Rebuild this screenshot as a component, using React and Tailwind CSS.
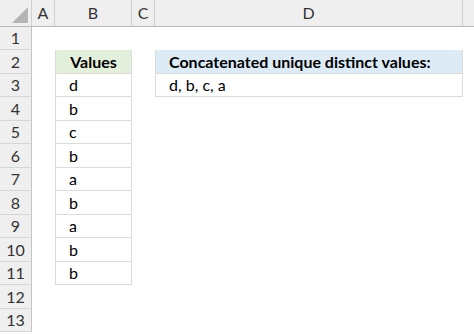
import React from "react";

const rowHeights = [23, 24, 23, 24, 23, 24, 23, 24, 23, 24, 23, 24, 23];
const bVals = { 3: "d", 4: "b", 5: "c", 6: "b", 7: "a", 8: "b", 9: "a", 10: "b", 11: "b" };

const font = { fontFamily: "Lato, 'Open Sans', sans-serif" };

export default function App() {
  return (
    <div className="w-[474px] h-[334px] overflow-hidden bg-white text-[16px] text-black" style={font}>
      {/* column header */}
      <div className="flex h-[27px] bg-[#efefef] border-b border-[#b8b8b8]">
        <div className="w-[32px] h-full border-r border-[#cfcfcf] relative">
          <svg className="absolute right-[3px] bottom-[3px]" width="16" height="16" viewBox="0 0 16 16">
            <polygon points="16,0 16,16 0,16" fill="#b5b5b5" />
          </svg>
        </div>
        <div className="w-[23px] border-r border-[#cfcfcf] flex items-center justify-center text-[#333]">A</div>
        <div className="w-[77px] border-r border-[#cfcfcf] flex items-center justify-center text-[#333]">B</div>
        <div className="w-[23px] border-r border-[#cfcfcf] flex items-center justify-center text-[#333]">C</div>
        <div className="w-[308px] border-r border-[#cfcfcf] flex items-center justify-center text-[#333]">D</div>
        <div className="flex-1"></div>
      </div>
      {rowHeights.map((h, i) => {
        const r = i + 1;
        const isB = r >= 2 && r <= 11;
        const isD = r === 2 || r === 3;
        return (
          <div key={r} className="flex" style={{ height: h }}>
            <div className="w-[32px] shrink-0 bg-[#efefef] border-r border-b border-r-[#c4c4c4] border-b-[#d6d6d6] flex items-center justify-center text-[#333]">
              {r}
            </div>
            <div className="w-[23px] shrink-0"></div>
            {isB ? (
              <div
                className={
                  "w-[77px] shrink-0 border-l border-r border-b border-[#dcdcdc] flex items-center " +
                  (r === 2 ? "bg-[#e2efda] font-bold justify-center" : "pl-[13px]")
                }
              >
                {r === 2 ? "Values" : bVals[r]}
              </div>
            ) : (
              <div className="w-[77px] shrink-0"></div>
            )}
            <div className="w-[23px] shrink-0"></div>
            {isD ? (
              <div
                className={
                  "w-[308px] shrink-0 border-l border-r border-b border-[#dcdcdc] flex items-center pl-[13px] " +
                  (r === 2 ? "bg-[#ddebf7] font-bold" : "")
                }
              >
                {r === 2 ? "Concatenated unique distinct values:" : "d, b, c, a"}
              </div>
            ) : (
              <div className="w-[308px] shrink-0"></div>
            )}
            <div className="flex-1"></div>
          </div>
        );
      })}
    </div>
  );
}
